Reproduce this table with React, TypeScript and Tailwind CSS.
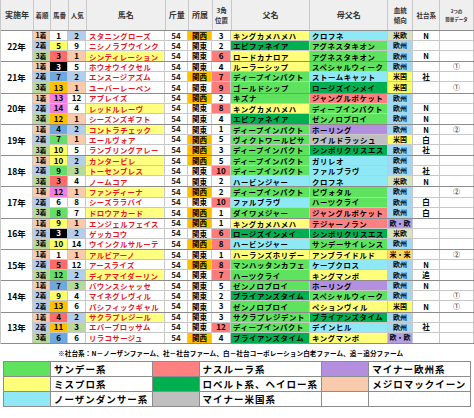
import React from 'react';

// 血統色
const C: Record<string, string> = {
    S: 'bg-[#5fe35f]',
    M: 'bg-[#ffff7a]',
    N: 'bg-[#8ee8f6]',
    A: 'bg-[#ff8080]',
    R: 'bg-[#00b050]',
    G: 'bg-[#bfbfbf]',
    L: 'bg-[#b48fe0]',
};

const gate: Record<string, string> = {
    w: 'bg-white text-black',
    k: 'bg-black text-white',
    r: 'bg-[#ff6b6b] text-black',
    b: 'bg-[#6fa8dc] text-black',
    y: 'bg-[#ffff66] text-black',
    g: 'bg-[#66dd66] text-black',
    o: 'bg-[#ffc000] text-black',
    p: 'bg-[#f07fdf] text-black',
};

const trendColor: Record<string, string> = {
    '米欧': 'bg-[#d8e4bc]',
    '欧州': 'bg-[#a3d8f2]',
    '米国': 'bg-[#ffff66]',
    '欧・欧': 'bg-[#b4a0e0]',
    '米・米': 'bg-[#ffd966]',
};

type Row = [number, number, string, number, string, boolean, boolean, number, string, string, string, string, string, string, string];

const years: { year: string; rows: Row[] }[] = [
    {
        year: '22年', rows: [
            [1, 1, 'w', 2, 'スタニングローズ', false, true, 3, 'キングカメハメハ', 'M', 'クロフネ', 'N', '米欧', 'N', ''],
            [2, 5, 'y', 9, 'ニシノラブウインク', false, false, 2, 'エピファネイア', 'R', 'アグネスタキオン', 'S', '欧州', '', ''],
            [3, 3, 'r', 1, 'シンティレーション', true, false, 6, 'ロードカナロア', 'M', 'アグネスタキオン', 'S', '欧州', 'N', ''],
        ]
    },
    {
        year: '21年', rows: [
            [1, 3, 'k', 5, 'ホウオウイクセル', false, false, 4, 'ルーラーシップ', 'M', 'スペシャルウィーク', 'S', '欧州', '', '①'],
            [2, 7, 'b', 2, 'エンスージアズム', false, true, 7, 'ディープインパクト', 'S', 'ストームキャット', 'N', '米国', '社', ''],
            [3, 13, 'o', 1, 'ユーバーレーベン', false, false, 9, 'ゴールドシップ', 'S', 'ロージズインメイ', 'R', '米国', '', '①'],
        ]
    },
    {
        year: '20年', rows: [
            [1, 13, 'p', 12, 'アブレイズ', false, true, 2, 'キズナ', 'S', 'ジャングルポケット', 'A', '欧州', '', ''],
            [2, 14, 'p', 4, 'レッドルレーヴ', true, false, 8, 'キングカメハメハ', 'M', 'ディープインパクト', 'S', '欧州', 'N', ''],
            [3, 12, 'o', 1, 'シーズンズギフト', false, false, 4, 'エピファネイア', 'R', 'ゼンノロブロイ', 'S', '欧州', 'N', ''],
        ]
    },
    {
        year: '19年', rows: [
            [1, 4, 'b', 2, 'コントラチェック', true, false, 1, 'ディープインパクト', 'S', 'ホーリング', 'L', '欧州', 'N', '②'],
            [2, 7, 'g', 1, 'エールヴォア', false, true, 5, 'ヴィクトワールピサ', 'S', 'ワイルドラッシュ', 'G', '米国', '白', ''],
            [3, 10, 'y', 5, 'ランブリングアレー', false, true, 3, 'ディープインパクト', 'S', 'シンボリクリスエス', 'R', '欧州', '社', ''],
        ]
    },
    {
        year: '18年', rows: [
            [1, 10, 'y', 2, 'カンタービレ', true, true, 5, 'ディープインパクト', 'S', 'ガリレオ', 'N', '欧州', '', ''],
            [2, 9, 'g', 3, 'トーセンブレス', true, false, 10, 'ディープインパクト', 'S', 'ファルブラヴ', 'N', '欧州', '社', ''],
            [3, 3, 'r', 4, 'ノームコア', false, false, 2, 'ハービンジャー', 'N', 'クロフネ', 'N', '米欧', 'N', ''],
        ]
    },
    {
        year: '17年', rows: [
            [1, 12, 'p', 1, 'ファンディーナ', true, true, 2, 'ディープインパクト', 'S', 'ピヴォタル', 'S', '欧州', '', '②'],
            [2, 6, 'w', 8, 'シーズララバイ', false, false, 10, 'ファルブラヴ', 'N', 'ハーツクライ', 'S', '欧州', '白', ''],
            [3, 8, 'g', 7, 'ドロウアカード', true, true, 1, 'ダイワメジャー', 'S', 'ジャングルポケット', 'A', '欧州', '白', ''],
        ]
    },
    {
        year: '16年', rows: [
            [1, 9, 'y', 1, 'エンジェルフェイス', false, true, 1, 'キングカメハメハ', 'M', 'テジャーノラン', 'A', '欧・欧', '', ''],
            [2, 3, 'k', 2, 'ゲッカコウ', false, false, 6, 'ロージズインメイ', 'R', 'シンボリクリスエス', 'R', '米欧', '', ''],
            [3, 10, 'y', 14, 'ウインクルサルーテ', false, true, 8, 'ハービンジャー', 'N', 'サンデーサイレンス', 'S', '欧州', '', ''],
        ]
    },
    {
        year: '15年', rows: [
            [1, 1, 'w', 1, 'アルビアーノ', true, false, 1, 'ハーランズホリデー', 'M', 'アンブライドルド', 'M', '米・米', '', '②'],
            [2, 5, 'r', 12, 'アースライズ', false, true, 8, 'マンハッタンカフェ', 'S', 'ケープクロス', 'N', '欧州', 'N', ''],
            [3, 12, 'g', 2, 'ディアマイダーリン', true, false, 7, 'ハーツクライ', 'S', 'キングマンボ', 'M', '欧州', '追', ''],
        ]
    },
    {
        year: '14年', rows: [
            [1, 7, 'b', 3, 'バウンスシャッセ', false, false, 5, 'ゼンノロブロイ', 'S', 'ホーリング', 'L', '欧州', 'N', ''],
            [2, 9, 'y', 4, 'マイネグレヴィル', false, false, 2, 'ブライアンズタイム', 'R', 'スペシャルウィーク', 'S', '欧州', '', '①'],
            [2, 13, 'o', 6, 'パシフィックギャル', false, false, 3, 'ゼンノロブロイ', 'S', 'ペションヴィル', 'M', '米国', 'N', '①'],
        ]
    },
    {
        year: '13年', rows: [
            [1, 4, 'r', 2, 'サクラプレジール', true, false, 3, 'サクラプレジデント', 'S', 'ブライアンズタイム', 'R', '欧州', '', ''],
            [2, 11, 'o', 3, 'エバーブロッサム', false, false, 12, 'ディープインパクト', 'S', 'デインヒル', 'N', '欧州', '社', ''],
            [3, 6, 'b', 6, 'リラコサージュ', false, true, 4, 'ブライアンズタイム', 'R', 'キングマンボ', 'M', '欧・欧', '', ''],
        ]
    },
];

const posColor = ['', 'bg-[#f8cbad]', 'bg-[#b4cdeb]', 'bg-[#b8d89c]'];
const popColor = (p: number) => (p === 1 ? 'bg-[#f8cbad]' : p === 2 ? 'bg-[#b4cdeb]' : p === 3 ? 'bg-[#b8d89c]' : 'bg-white');
const cornerRed = [6, 7, 8, 9, 10, 12];

const cell = 'flex items-center border-r border-[#c8c8c8] h-full';

const legend = [
    ['bg-[#5fe35f]', 'サンデー系', 'bg-[#ff8080]', 'ナスルーラ系', 'bg-[#b48fe0]', 'マイナー欧州系'],
    ['bg-[#ffff7a]', 'ミスプロ系', 'bg-[#00b050]', 'ロベルト系、ヘイロー系', 'bg-[#f8cbad]', 'メジロマックイーン'],
    ['bg-[#8ee8f6]', 'ノーザンダンサー系', 'bg-[#bfbfbf]', 'マイナー米国系', 'bg-white', ''],
];

export default function App() {
    return (
        <div className="w-[474px] h-[418px] bg-white text-black overflow-hidden" style={{ fontFamily: '"Noto Sans CJK JP", "Noto Sans", sans-serif' }}>
            {/* Table */}
            <div className="border-l border-[#c8c8c8] font-bold">
                {/* Header */}
                <div className="flex h-[31px] bg-[#efefef] border-b border-[#8c8c8c] text-[#333] text-[8px] leading-none">
                    <div className={`${cell} w-[33px] justify-center`}>実施年</div>
                    <div className={`${cell} w-[17px] justify-center text-[6.5px]`}>着順</div>
                    <div className={`${cell} w-[18px] justify-center text-[6.5px]`}>馬番</div>
                    <div className={`${cell} w-[18px] justify-center text-[6.5px]`}>人気</div>
                    <div className={`${cell} w-[79px] justify-center`}>馬名</div>
                    <div className={`${cell} w-[23px] justify-center`}>斤量</div>
                    <div className={`${cell} w-[24px] justify-center`}>所属</div>
                    <div className={`${cell} w-[19px] justify-center flex-col gap-[4px] text-[6.5px]`}><span>3角</span><span>位置</span></div>
                    <div className={`${cell} w-[79px] justify-center`}>父名</div>
                    <div className={`${cell} w-[78px] justify-center`}>母父名</div>
                    <div className={`${cell} w-[25px] justify-center flex-col gap-[4px] text-[6.5px]`}><span>血統</span><span>傾向</span></div>
                    <div className={`${cell} w-[27px] justify-center text-[6.5px]`}>社台系</div>
                    <div className={`${cell} w-[34px] justify-center flex-col gap-[3px] text-[4.5px]`}><span>2つの</span><span>簡単データ</span></div>
                </div>

                {years.map((y) => (
                    <div key={y.year} className="flex border-b border-[#8c8c8c]">
                        <div className="w-[33px] flex items-center justify-center border-r border-[#c8c8c8] text-[8.5px]">{y.year}</div>
                        <div className="flex flex-col">
                            {y.rows.map((r, i) => {
                                const [pos, num, g, pop, name, hl, kansai, corner, sire, sc, dam, dc, trend, shadai, two] = r;
                                return (
                                    <div key={i} className="flex h-[10.1px] border-b border-[#c8c8c8] last:border-b-0 text-[8px] leading-none">
                                        <div className={`${cell} w-[17px] justify-center text-[7px] ${posColor[pos]}`}>{pos}着</div>
                                        <div className={`${cell} w-[18px] justify-center ${gate[g]}`}>{num}</div>
                                        <div className={`${cell} w-[18px] justify-center ${popColor(pop)}`}>{pop}</div>
                                        <div className={`${cell} w-[79px] pl-[3px] text-[#e8141e] text-[7.4px] tracking-[0.4px] whitespace-nowrap ${hl ? 'bg-[#ffff80]' : ''}`}>{name}</div>
                                        <div className={`${cell} w-[23px] justify-center font-semibold text-[#222]`}>54</div>
                                        <div className={`${cell} w-[24px] justify-center text-[7.5px] font-semibold ${kansai ? 'bg-[#ffc000]' : ''}`}>{kansai ? '関西' : '関東'}</div>
                                        <div className={`${cell} w-[19px] justify-center ${cornerRed.includes(corner) ? 'bg-[#ff7c7c]' : ''}`}>{corner}</div>
                                        <div className={`${cell} w-[79px] pl-[2px] text-[7.4px] tracking-[0.6px] whitespace-nowrap ${C[sc]}`}>{sire}</div>
                                        <div className={`${cell} w-[78px] pl-[2px] text-[7.4px] tracking-[0.6px] whitespace-nowrap ${C[dc]}`}>{dam}</div>
                                        <div className={`${cell} w-[25px] justify-center text-[7px] whitespace-nowrap ${trendColor[trend]}`}>{trend}</div>
                                        <div className={`${cell} w-[27px] justify-center text-[7.5px]`}>{shadai}</div>
                                        <div className={`${cell} w-[34px] justify-center text-[7px] font-normal`}>{two}</div>
                                    </div>
                                );
                            })}
                        </div>
                    </div>
                ))}
            </div>

            {/* Note */}
            <div className="pl-[58px] pt-[6px] text-[6.6px] font-bold leading-none whitespace-nowrap tracking-[0.1px]">
                ※社台系：N－ノーザンファーム、社－社台ファーム、白－社台コーポレーション白老ファーム、追－追分ファーム
            </div>

            {/* Legend */}
            <div className="ml-[3px] mt-[5px] w-[468px] border-t border-l border-[#8c8c8c]">
                {legend.map((l, i) => (
                    <div key={i} className="flex h-[15px] border-b border-[#8c8c8c]">
                        <div className={`w-[47px] border-r border-[#8c8c8c] ${l[0]}`} />
                        <div className="w-[102px] border-r border-[#8c8c8c] flex items-center pl-[3px] text-[9.5px] font-bold tracking-[1px] whitespace-nowrap">{l[1]}</div>
                        <div className={`w-[47px] border-r border-[#8c8c8c] ${l[2]}`} />
                        <div className="w-[123px] border-r border-[#8c8c8c] flex items-center pl-[3px] text-[9.5px] font-bold tracking-[1px] whitespace-nowrap">{l[3]}</div>
                        <div className={`w-[47px] border-r border-[#8c8c8c] ${l[4]}`} />
                        <div className="w-[102px] border-r border-[#8c8c8c] flex items-center pl-[3px] text-[9.5px] font-bold tracking-[1px] whitespace-nowrap overflow-hidden">{l[5]}</div>
                    </div>
                ))}
            </div>
        </div>
    );
}
